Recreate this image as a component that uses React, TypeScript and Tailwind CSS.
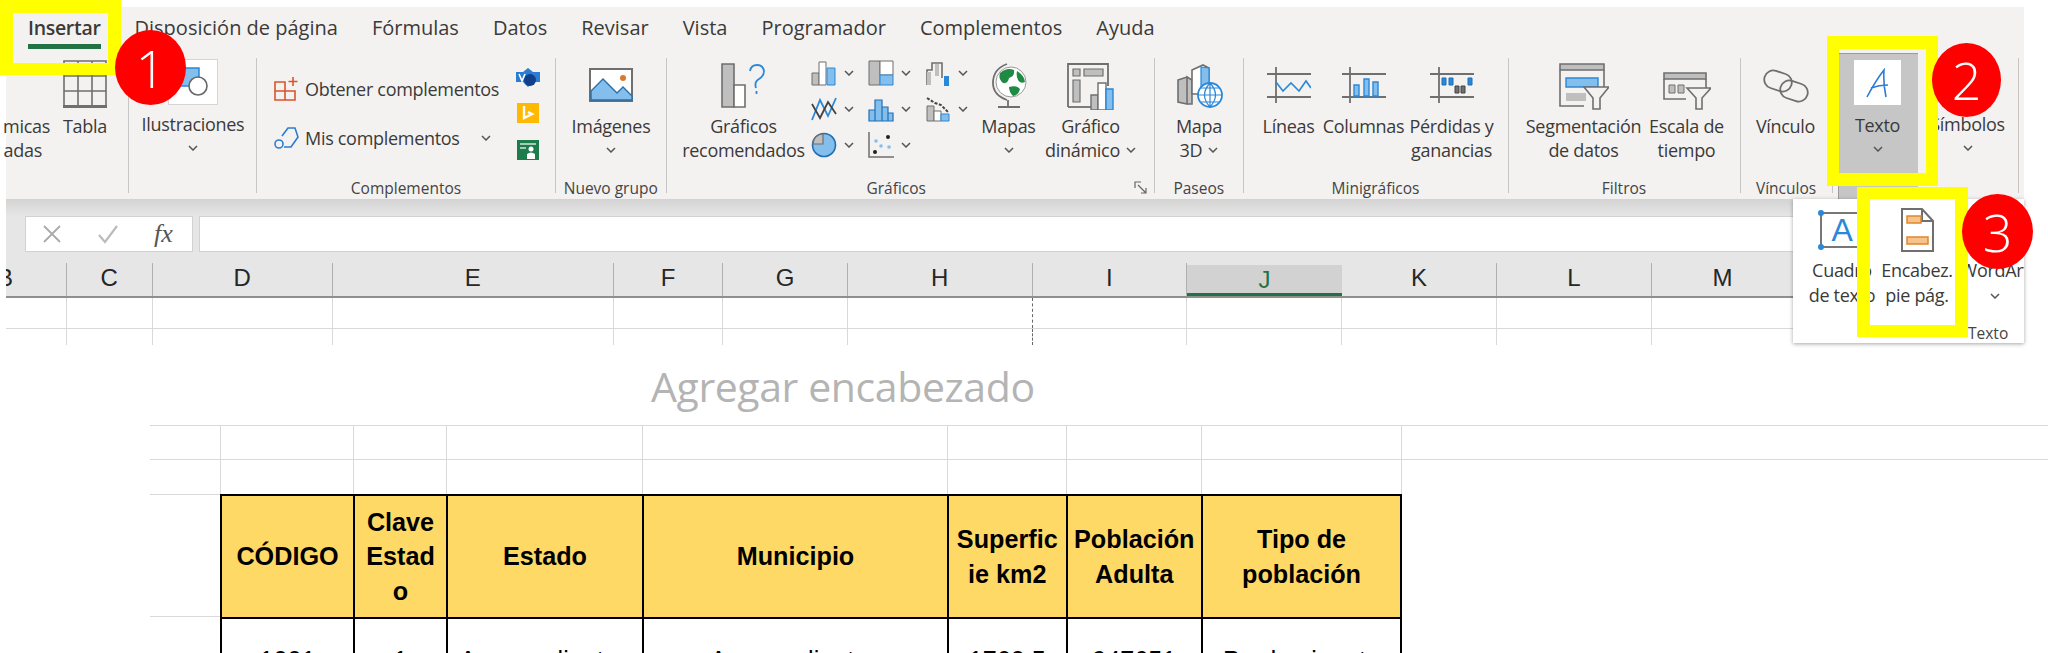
import React from "react";

const G = "#6f6f6f";
const LG = "#bfbfbf";
const B = "#2b88d8";
const LB = "#83beec";

function Chev({ className = "" }: { className?: string }) {
  return (
    <svg width="10" height="6" viewBox="0 0 10 6" className={className}>
      <path d="M1 1l4 4 4-4" fill="none" stroke="#555" strokeWidth="1.5" />
    </svg>
  );
}

function Large({ w, icon, lines, chev, raised, inlineChev }: { w: number; icon?: React.ReactNode; lines: string[]; chev?: boolean; raised?: boolean; inlineChev?: boolean }) {
  return (
    <div className="flex shrink-0 flex-col items-center text-[18px] leading-[24px] whitespace-nowrap" style={{ width: w }}>
      <div className={raised ? "flex h-[54px] flex-col items-center" : "flex h-[56px] flex-col items-center"}>{icon}</div>
      {lines.map((l, i) => (
        <div key={i} className="flex items-center gap-[6px]">
          {l}
          {inlineChev && i === lines.length - 1 && <Chev />}
        </div>
      ))}
      {chev && (
        <div className="flex h-[24px] items-center">
          <Chev />
        </div>
      )}
    </div>
  );
}

function Group({ w, label, children, labelExtra }: { w: number; label: string; children: React.ReactNode; labelExtra?: React.ReactNode }) {
  return (
    <div className="flex shrink-0 flex-col border-r-[1.5px] border-[#c8c6c4]" style={{ width: w }}>
      <div className="flex flex-1">{children}</div>
      <div className="-mb-[5px] flex h-[20px] items-center text-[15.5px] leading-[20px] tracking-normal text-[#444]">
        <div className="flex-1 text-center">{label}</div>
        {labelExtra}
      </div>
    </div>
  );
}

function SmallChart({ children }: { children: React.ReactNode }) {
  return (
    <div className="flex h-[30px] items-center gap-[7px]">
      <svg width="26" height="26" viewBox="0 0 26 26">{children}</svg>
      <Chev />
    </div>
  );
}

function App() {
  const sheetCols = "grid grid-cols-[60.5px_86.5px_179.5px_281.5px_109px_125px_184.5px_154.5px_155px_155px_155px_141px]";
  const letters = ["B", "C", "D", "E", "F", "G", "H", "I", "J", "K", "L", "M"];
  const tableCols = "grid grid-cols-[70px_133px_93px_196px_305px_118.5px_135.5px_201px]";
  const heads = ["CÓDIGO", "Clave Estad o", "Estado", "Municipio", "Superfic ie km2", "Población Adulta", "Tipo de población"];
  const data = ["1001", "1", "Aguascalientes", "Aguascalientes", "1760.5", "947651", "Predominante"];

  return (
    <div className="relative h-[653px] w-[2048px] overflow-hidden bg-white font-['Open_Sans','Noto_Sans',sans-serif] text-[#3b3a39]">
      <div className="ml-[6px] w-[2018px] pt-[7px]">
        <div className="h-[192px] bg-[#f3f2f1]">
          <div className="flex h-[51px] gap-[34px] pl-[22px] pt-[7px] text-[20px] leading-[28px]">
            <div className="relative text-[19.5px] font-semibold tracking-[-0.3px]">
              Insertar
              <div className="absolute left-0 right-0 top-[30px] h-[5px] bg-[#217346]"></div>
            </div>
            {["Disposición de página", "Fórmulas", "Datos", "Revisar", "Vista", "Programador", "Complementos", "Ayuda"].map((t) => (
              <div key={t}>{t}</div>
            ))}
          </div>
          <div className="flex h-[135px] tracking-[-0.3px]">
            <Group w={123} label="">
              <div className="flex w-[50px] shrink-0 flex-col items-end pt-[56px] text-[18px] leading-[24px]">
                <div className="pr-[6px]">micas</div>
                <div className="pr-[14px]">adas</div>
              </div>
              <Large
                w={58}
                lines={["Tabla"]}
                icon={
                  <svg width="44" height="48" viewBox="0 0 44 48" className="mt-[2px]">
                    <path d="M1 1h42v46H1zM1 16h42M1 31h42M15 1v46M29 1v46" fill="none" stroke={G} strokeWidth="1.6" />
                    <path d="M0 46.5h44" stroke={G} strokeWidth="3" />
                  </svg>
                }
              />
            </Group>
            <Group w={128} label="">
              <Large
                w={128}
                raised
                chev
                lines={["Ilustraciones"]}
                icon={
                  <div className="mt-px flex h-[46px] w-[50px] items-center justify-center border border-[#d5d5d5] bg-white">
                    <svg width="40" height="36" viewBox="0 0 40 36">
                      <path d="M2 4h24v18H2z" fill={LB} stroke={B} strokeWidth="1.5" />
                      <circle cx="25" cy="22" r="9" fill="#fff" stroke="#666" strokeWidth="1.6" />
                    </svg>
                  </div>
                }
              />
            </Group>
            <Group w={299} label="Complementos">
              <div className="flex w-[259px] flex-col pl-[17px] pt-[19px] text-[18px] leading-[24px]">
                <div className="flex h-[24px] items-center gap-[6px]">
                  <svg width="25" height="24" viewBox="0 0 25 24">
                    <path d="M1 5h10v9H1zM11 5v9h10v9H1v-9M11 14v9" fill="none" stroke="#d9542b" strokeWidth="1.6" />
                    <path d="M19 0v9M14.5 4.5h9" stroke="#d9542b" strokeWidth="1.6" />
                  </svg>
                  Obtener complementos
                </div>
                <div className="mt-[25px] flex h-[24px] items-center gap-[6px]">
                  <svg width="25" height="24" viewBox="0 0 25 24">
                    <path d="M8 10L14 2h7l3 9-7 10h-7" fill="none" stroke="#2b7cd3" strokeWidth="1.6" />
                    <circle cx="5" cy="18" r="4" fill="none" stroke="#2b7cd3" strokeWidth="1.6" />
                  </svg>
                  Mis complementos
                  <Chev className="ml-[15px]" />
                </div>
              </div>
              <div className="flex flex-col items-center">
                <svg width="24" height="19" viewBox="0 0 24 19" className="mt-[10px]">
                  <path d="M12 0l5 4h7v10h-7l-5 5-5-5H0V4h7z" fill="#2b7cd3" />
                  <circle cx="14" cy="12" r="6" fill="#123f8c" />
                  <path d="M3 6l3 7 3-7" fill="none" stroke="#fff" strokeWidth="1.6" />
                </svg>
                <svg width="22" height="20" viewBox="0 0 22 20" className="mt-[16px]">
                  <path d="M0 0h22v20H0z" fill="#ffb900" />
                  <path d="M7 3v12l8-4-4-2" fill="none" stroke="#fff" strokeWidth="2.4" />
                </svg>
                <svg width="22" height="20" viewBox="0 0 22 20" className="mt-[17px]">
                  <path d="M0 0h22v20H0z" fill="#1e7b4b" />
                  <path d="M3 4h16M3 8h6" stroke="#cfe8da" strokeWidth="1.5" />
                  <circle cx="14" cy="9" r="2.5" fill="#fff" />
                  <path d="M10 19v-5q4-3 8 0v5z" fill="#fff" />
                </svg>
              </div>
            </Group>
            <Group w={110.5} label="Nuevo grupo">
              <Large
                w={110}
                chev
                lines={["Imágenes"]}
                icon={
                  <svg width="44" height="34" viewBox="0 0 44 34" className="mt-[10px]">
                    <path d="M1 1h42v32H1z" fill="#fff" stroke={G} strokeWidth="2" />
                    <path d="M2 32V23l12-12 14 14 6-6 9 9v4z" fill={LB} stroke="#2a6fa8" strokeWidth="1.4" />
                    <circle cx="34" cy="10" r="3" fill="#d97a2b" />
                  </svg>
                }
              />
            </Group>
            <Group
              w={488.5}
              label="Gráficos"
              labelExtra={
                <div className="flex w-[28px] justify-center pl-[2px]">
                  <svg width="14" height="14" viewBox="0 0 14 14">
                    <path d="M1 7V1h6M4 4l8 8M12 7v5H7" fill="none" stroke="#666" strokeWidth="1.2" />
                  </svg>
                </div>
              }
            >
              <div className="w-[10px] shrink-0"></div>
              <Large
                w={134}
                lines={["Gráficos", "recomendados"]}
                icon={
                  <svg width="46" height="46" viewBox="0 0 46 46" className="mt-[5px]">
                    <path d="M1 1h12v43H1z" fill={LG} stroke={G} strokeWidth="1.6" />
                    <path d="M13 22h11v22H13z" fill="#fff" stroke={G} strokeWidth="1.6" />
                    <path d="M29 8q1-6 7-6t7 6q0 5-5 8t-3 9M35.5 28v3" fill="none" stroke={B} strokeWidth="1.8" />
                  </svg>
                }
              />
              <div className="grid h-fit w-[171px] shrink-0 grid-cols-3 gap-y-[6px]">
                <SmallChart>
                  <path d="M1 13h7v12H1z" fill={LG} stroke={G} />
                  <path d="M8 2h7v23H8z" fill="#fff" stroke={G} />
                  <path d="M16 8h8v17h-8z" fill={LB} stroke={B} />
                </SmallChart>
                <SmallChart>
                  <path d="M1 1h11v24H1z" fill={LG} stroke={G} />
                  <path d="M12 1h13v14H12z" fill="#fff" stroke={G} />
                  <path d="M12 15h13v10H12z" fill={LB} stroke={B} />
                </SmallChart>
                <SmallChart>
                  <path d="M2 25V10h5V3h10v15" fill="none" stroke={G} strokeWidth="1.6" />
                  <path d="M2 25V12h4v13zM10 4h4v12h-4z" fill={LG} />
                  <path d="M19 16h5v10h-5z" fill={B} />
                </SmallChart>
                <SmallChart>
                  <path d="M1 24L9 4l8 16 8-18" fill="none" stroke={B} strokeWidth="1.8" />
                  <path d="M1 8l8 14 8-16 8 12" fill="none" stroke="#444" strokeWidth="1.8" />
                </SmallChart>
                <SmallChart>
                  <path d="M1 14h6v11H1zM7 4h7v21H7zM14 11h6v14h-6zM20 17h5v8h-5z" fill={LB} stroke="#1f6fb5" strokeWidth="1.2" />
                </SmallChart>
                <SmallChart>
                  <path d="M2 2l8 5 6 2 8 8" fill="none" stroke="#444" strokeWidth="2" strokeDasharray="3 1.5" />
                  <path d="M2 10h7v15H2z" fill={LG} stroke={G} />
                  <path d="M9 15h7v10H9z" fill="#fff" stroke={G} />
                  <path d="M16 18h8v7h-8z" fill={LB} stroke={B} />
                </SmallChart>
                <SmallChart>
                  <circle cx="13" cy="13" r="11.5" fill={LB} stroke="#1f6fb5" strokeWidth="1.6" />
                  <path d="M12 2A10 10 0 002 12h10z" fill={LG} stroke={G} strokeWidth="1.2" />
                </SmallChart>
                <SmallChart>
                  <path d="M1 0v25h25" fill="none" stroke={G} strokeWidth="1.5" />
                  <circle cx="7" cy="20" r="2" fill="#222" />
                  <circle cx="20" cy="5" r="2" fill="#222" />
                  <circle cx="8" cy="9" r="1.8" fill={LB} />
                  <circle cx="13" cy="14" r="1.8" fill={LB} />
                  <circle cx="21" cy="15" r="1.8" fill={LB} />
                </SmallChart>
              </div>
              <Large
                w={54}
                chev
                lines={["Mapas"]}
                icon={
                  <svg width="38" height="46" viewBox="0 0 38 46" className="mt-[5px]">
                    <circle cx="21" cy="19" r="15" fill="#fff" stroke="#999" strokeWidth="1" />
                    <path d="M10 10q7-6 14-3 1 6-5 8-1 6-6 5-5-4-3-10zM27 8q7 4 8 11-5 2-7-2t-1-9zM19 24q8-2 11 2-2 7-7 7-4-4-4-9z" fill="#1e8a44" />
                    <path d="M17 1Q3 6 3 20q0 12 14 17M18 37v6M8 44h22" fill="none" stroke={G} strokeWidth="1.8" />
                  </svg>
                }
              />
              <Large
                w={110}
                inlineChev
                lines={["Gráfico", "dinámico"]}
                icon={
                  <svg width="47" height="47" viewBox="0 0 47 47" className="mt-[5px]">
                    <path d="M1 44V1h40v22" fill="none" stroke={G} strokeWidth="1.8" />
                    <path d="M1 44h23" stroke={G} strokeWidth="1.8" />
                    <path d="M6 6h7v7H6zM17 6h19v7H17zM6 17h7v22H6z" fill={LG} stroke={G} strokeWidth="1.2" />
                    <path d="M24 32h7v15h-7z" fill={LG} stroke={G} strokeWidth="1.4" />
                    <path d="M31 20h8v27h-8z" fill="#fff" stroke={G} strokeWidth="1.4" />
                    <path d="M39 26h7v21h-7z" fill={LB} stroke={B} strokeWidth="1.4" />
                  </svg>
                }
              />
            </Group>
            <Group w={88.5} label="Paseos">
              <Large
                w={88}
                inlineChev
                lines={["Mapa", "3D"]}
                icon={
                  <svg width="48" height="44" viewBox="0 0 48 44" className="mt-[6px]">
                    <path d="M3 16l9-3v27l-9-2zM12 13l5 3v24h-5z" fill={LG} stroke={G} strokeWidth="1.6" />
                    <path d="M17 6l11-5 6 3v26H17z" fill="#fff" stroke={G} strokeWidth="1.6" />
                    <path d="M26 3l8 1v24h-8z" fill={LB} stroke={B} strokeWidth="1.2" />
                    <circle cx="35" cy="31" r="12" fill="#fff" stroke={B} strokeWidth="1.8" />
                    <path d="M23 31h24M35 19v24M26 24h18M26 38h18M35 19q-11 12 0 24M35 19q11 12 0 24" fill="none" stroke={B} strokeWidth="1.2" />
                  </svg>
                }
              />
            </Group>
            <Group w={265} label="Minigráficos">
              <div className="w-[12px] shrink-0"></div>
              <Large
                w={66}
                lines={["Líneas"]}
                icon={
                  <svg width="44" height="36" viewBox="0 0 44 36" className="mt-[9px]">
                    <path d="M0 7h44M0 30h44M9 0v36" stroke={G} strokeWidth="1.8" />
                    <path d="M9 15l7 9 8-8 8 8 7-10 5 7" fill="none" stroke={B} strokeWidth="1.6" />
                  </svg>
                }
              />
              <Large
                w={84}
                lines={["Columnas"]}
                icon={
                  <svg width="44" height="36" viewBox="0 0 44 36" className="mt-[9px]">
                    <path d="M0 7h44M0 30h44M8 0v36" stroke={G} strokeWidth="1.8" />
                    <path d="M12 18h5v11h-5zM22 12h5v17h-5zM31 15h5v14h-5z" fill={LB} stroke={B} strokeWidth="1.4" />
                  </svg>
                }
              />
              <Large
                w={92}
                lines={["Pérdidas y", "ganancias"]}
                icon={
                  <svg width="44" height="36" viewBox="0 0 44 36" className="mt-[9px]">
                    <path d="M0 7h44M0 30h44M9 0v36" stroke={G} strokeWidth="1.8" />
                    <path d="M12 11h4v7h-4zM19 11h4v7h-4zM38 11h4v7h-4z" fill={B} stroke="#1f6fb5" />
                    <path d="M25 19h4v7h-4zM31 19h4v7h-4z" fill={G} stroke="#444" />
                  </svg>
                }
              />
            </Group>
            <Group w={232} label="Filtros">
              <div className="w-[11px] shrink-0"></div>
              <Large
                w={128}
                lines={["Segmentación", "de datos"]}
                icon={
                  <svg width="50" height="47" viewBox="0 0 50 47" className="mt-[5px]">
                    <path d="M1 1h44v6H1z" fill={LG} stroke={G} strokeWidth="1.6" />
                    <path d="M1 7v36h24M45 7v18" fill="none" stroke={G} strokeWidth="1.6" />
                    <path d="M7 15h32v9H7z" fill={LB} stroke={B} strokeWidth="1.4" />
                    <path d="M7 30h20v8H7z" fill={LG} />
                    <path d="M25 24h25L41 35v11h-7V35z" fill="#f3f2f1" stroke={G} strokeWidth="1.6" />
                  </svg>
                }
              />
              <Large
                w={78}
                lines={["Escala de", "tiempo"]}
                icon={
                  <svg width="48" height="38" viewBox="0 0 48 38" className="mt-[14px]">
                    <path d="M1 1h42v6H1z" fill={LG} stroke={G} strokeWidth="1.6" />
                    <path d="M1 7v20h22M43 7v9" fill="none" stroke={G} strokeWidth="1.6" />
                    <path d="M6 13h6v8H6zM15 13h6v8h-6z" fill={LG} stroke={G} />
                    <path d="M24 16h24L39 26v11h-6V26z" fill="#f3f2f1" stroke={G} strokeWidth="1.6" />
                  </svg>
                }
              />
            </Group>
            <Group w={92} label="Vínculos">
              <Large
                w={90}
                lines={["Vínculo"]}
                icon={
                  <svg width="46" height="34" viewBox="0 0 46 34" className="mt-[11px]">
                    <rect x="1" y="3" width="28" height="18" rx="9" transform="rotate(18 15 12)" fill="none" stroke={G} strokeWidth="1.8" />
                    <rect x="17" y="13" width="28" height="18" rx="9" transform="rotate(18 31 22)" fill="none" stroke={G} strokeWidth="1.8" />
                  </svg>
                }
              />
            </Group>
            <div className="flex w-[186px] shrink-0 border-r-[1.5px] border-[#c8c6c4]">
              <div className="-mt-[5px] ml-[5px] h-[146px] w-[80px] shrink-0 border-l border-t border-[#9a9a9a] bg-[#c6c6c6] pt-[5px]">
                <Large
                  w={78}
                  raised
                  chev
                  lines={["Texto"]}
                  icon={
                    <div className="mt-px flex h-[45px] w-[47px] items-center justify-center bg-white">
                      <svg width="28" height="30" viewBox="0 0 28 30">
                        <path d="M3 29Q12 12 20 2q-1 13 2 27M7 20q8-3 17-3" fill="none" stroke="#2b7cd3" strokeWidth="1.6" />
                      </svg>
                    </div>
                  }
                />
              </div>
              <Large w={100} raised chev lines={["Símbolos"]} />
            </div>
          </div>
        </div>

        <div className="h-[17px] bg-gradient-to-b from-[#d3d3d3] to-[#e6e6e6]"></div>
        <div className="flex h-[36px] gap-[6px] bg-[#e6e6e6] pl-[19px]">
          <div className="flex w-[168px] items-center border border-[#d2d2d2] bg-white pl-[16px]">
            <svg width="20" height="20" viewBox="0 0 20 20">
              <path d="M2 2l16 16M18 2L2 18" stroke="#aaa" strokeWidth="1.8" />
            </svg>
            <svg width="22" height="20" viewBox="0 0 22 20" className="ml-[35px]">
              <path d="M2 11l6 7L20 2" fill="none" stroke="#bbb" strokeWidth="2.2" />
            </svg>
            <span className="ml-[35px] font-['Liberation_Serif',serif] text-[26px] italic leading-[30px] text-[#555]">fx</span>
          </div>
          <div className="flex-1 border border-[#d2d2d2] bg-white"></div>
        </div>
        <div className={`${sheetCols} h-[46px] border-b-2 border-[#8f8f8f] bg-[#e6e6e6] font-['Liberation_Sans',sans-serif] text-[24px] leading-[30px]`}>
          {letters.map((l) => (
            <div key={l} className="flex items-end overflow-hidden">
              {l === "J" ? (
                <div className="flex h-[31px] w-full justify-center border-b-[3px] border-[#217346] bg-[#d2d2d2] text-[#217346]">{l}</div>
              ) : (
                <div className={`flex h-[33px] w-full pb-px text-[#262626] ${l === "M" ? "" : "border-r border-[#b0b0b0]"} ${l === "B" ? "justify-start" : "justify-center"}`}>
                  <span className={l === "B" ? "-ml-[9px]" : ""}>{l}</span>
                </div>
              )}
            </div>
          ))}
        </div>
        {[31, 16].map((h, r) => (
          <div key={r} className={`${sheetCols} ${r === 0 ? "border-b border-[#d9d9d9]" : ""}`} style={{ height: h }}>
            {letters.map((l) => (
              <div key={l} className={l === "H" ? "border-r border-dashed border-[#666]" : l === "M" ? "" : "border-r border-[#d9d9d9]"}></div>
            ))}
          </div>
        ))}
      </div>

      <div className="ml-[651px] flex h-[80px] items-center pt-[2px] text-[41px] leading-[50px] tracking-[-0.4px] whitespace-nowrap text-[#b4b4b4]">Agregar encabezado</div>

      <div className="ml-[150px] font-['Liberation_Sans',sans-serif] text-[25.2px] leading-[34.5px] text-black">
        {[34, 35].map((h, r) => (
          <div key={r} className={`${tableCols} border-t border-[#d9d9d9]`} style={{ height: h }}>
            {[0, 1, 2, 3, 4, 5, 6, 7].map((c) => (
              <div key={c} className={c === 0 ? "" : c === 7 ? "border-x border-[#d9d9d9]" : "border-l border-[#d9d9d9]"}></div>
            ))}
          </div>
        ))}
        <div className={`${tableCols} h-[123px]`}>
          <div className="border-y border-[#d9d9d9]"></div>
          {heads.map((t, i) => (
            <div key={t} className={`flex items-center justify-center border-l-2 border-t-2 border-black bg-[#ffd966] px-[3px] text-center font-bold ${i === 6 ? "border-r-2" : ""}`}>
              {t}
            </div>
          ))}
        </div>
        <div className={`${tableCols} h-[60px]`}>
          <div></div>
          {data.map((t, i) => (
            <div key={i} className={`border-l-2 border-t-2 border-black pt-[24px] text-center whitespace-nowrap ${i === 6 ? "border-r-2" : ""}`}>
              {t}
            </div>
          ))}
        </div>
      </div>

      {/* dropdown of the collapsed Texto group */}
      <div className="absolute left-[1793px] top-[199px] flex h-[144px] w-[231px] flex-col overflow-hidden bg-white shadow-[0_1px_4px_rgba(0,0,0,0.35)]">
        <div className="flex flex-1 tracking-[-0.3px]">
          <div className="flex w-[98px] shrink-0 flex-col items-center text-[18px] leading-[25px] whitespace-nowrap">
            <div className="h-[59px] pt-[13px]">
              <div className="relative flex h-[36px] w-[44px] items-center justify-center border-2 border-[#777] font-['Liberation_Sans',sans-serif] text-[32px] text-[#2b88d8]">
                A
                <span className="absolute -left-[4px] -top-[4px] h-[6px] w-[6px] rounded-full bg-[#2b88d8]"></span>
                <span className="absolute -bottom-[4px] -left-[4px] h-[6px] w-[6px] rounded-full bg-[#2b88d8]"></span>
              </div>
            </div>
            <div>Cuadro</div>
            <div>de texto</div>
          </div>
          <div className="flex w-[52px] shrink-0 flex-col items-center text-[18px] leading-[25px] whitespace-nowrap">
            <div className="h-[59px] pt-[9px]">
              <svg width="33" height="44" viewBox="0 0 33 44">
                <path d="M1 1h20l11 12v30H1z" fill="#fff" stroke={G} strokeWidth="2" />
                <path d="M21 1v12h11" fill="none" stroke={G} strokeWidth="2" />
                <path d="M6 8h14v7H6zM6 29h21v7H6z" fill="#f6c48a" stroke="#e0862b" strokeWidth="1.5" />
              </svg>
            </div>
            <div>Encabez.</div>
            <div>pie pág.</div>
          </div>
          <div className="flex w-[104px] shrink-0 flex-col items-center text-[18px] leading-[25px] whitespace-nowrap">
            <div className="h-[59px]"></div>
            <div>WordArt</div>
            <div className="flex h-[25px] items-center">
              <Chev />
            </div>
          </div>
        </div>
        <div className="ml-[175px] h-[20px] text-[15.5px] leading-[20px] text-[#444]">Texto</div>
      </div>

      {/* yellow highlight frames */}
      <div className="absolute left-0 top-0 h-[75px] w-[121px] border-x-[13px] border-b-[12px] border-t-[13px] border-[#ffff00]"></div>
      <div className="absolute left-[1827px] top-[36px] h-[150px] w-[111px] border-x-[12px] border-y-[13px] border-[#ffff00]"></div>
      <div className="absolute left-[1857px] top-[187px] h-[150px] w-[111px] border-x-[13px] border-y-[12px] border-[#ffff00]"></div>

      {/* numbered badges */}
      <div className="absolute left-[115px] top-[30px] flex h-[75px] w-[71px] items-center justify-center rounded-[50%] bg-[#ff0000] text-[52px] font-light leading-none text-white">1</div>
      <div className="absolute left-[1932px] top-[43px] flex h-[74px] w-[69px] items-center justify-center rounded-[50%] bg-[#ff0000] text-[52px] font-light leading-none text-white">2</div>
      <div className="absolute left-[1962px] top-[194px] flex h-[75px] w-[71px] items-center justify-center rounded-[50%] bg-[#ff0000] text-[52px] font-light leading-none text-white">3</div>
    </div>
  );
}

export default App;
